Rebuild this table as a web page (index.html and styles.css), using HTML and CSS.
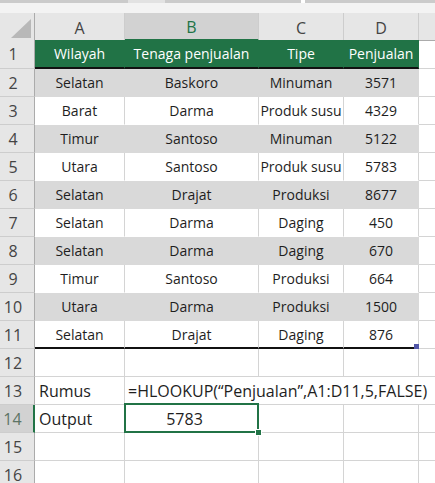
FILE: index.html
```html
<!DOCTYPE html>
<html>
<head>
<meta charset="utf-8">
<link rel="stylesheet" href="styles.css">
</head>
<body>
<div class="top">
  <div class="seg s1"></div><div class="seg s2"></div><div class="seg s3"></div><div class="seg s4"></div><div class="seg s5"></div>
</div>
<div class="sheet">
  <div class="row colhead">
    <div class="corner"><svg width="34" height="27" viewBox="0 0 34 27"><polygon points="31,6 31,25 11,25" fill="#b8b8b8"/></svg></div>
    <div class="ch">A</div><div class="ch sel">B</div><div class="ch">C</div><div class="ch">D</div><div class="ch last"></div>
  </div>

  <div class="row r1">
    <div class="rh">1</div>
    <div class="c hd">Wilayah</div><div class="c hd">Tenaga penjualan</div><div class="c hd">Tipe</div><div class="c hd">Penjualan</div><div class="c e"></div>
  </div>
  <div class="row">
    <div class="rh">2</div>
    <div class="c f">Selatan</div><div class="c f">Baskoro</div><div class="c f">Minuman</div><div class="c f">3571</div><div class="c e"></div>
  </div>
  <div class="row">
    <div class="rh">3</div>
    <div class="c w">Barat</div><div class="c w">Darma</div><div class="c w">Produk susu</div><div class="c w">4329</div><div class="c e"></div>
  </div>
  <div class="row">
    <div class="rh">4</div>
    <div class="c f">Timur</div><div class="c f">Santoso</div><div class="c f">Minuman</div><div class="c f">5122</div><div class="c e"></div>
  </div>
  <div class="row">
    <div class="rh">5</div>
    <div class="c w">Utara</div><div class="c w">Santoso</div><div class="c w">Produk susu</div><div class="c w">5783</div><div class="c e"></div>
  </div>
  <div class="row">
    <div class="rh">6</div>
    <div class="c f">Selatan</div><div class="c f">Drajat</div><div class="c f">Produksi</div><div class="c f">8677</div><div class="c e"></div>
  </div>
  <div class="row">
    <div class="rh">7</div>
    <div class="c w">Selatan</div><div class="c w">Darma</div><div class="c w">Daging</div><div class="c w">450</div><div class="c e"></div>
  </div>
  <div class="row">
    <div class="rh">8</div>
    <div class="c f">Selatan</div><div class="c f">Darma</div><div class="c f">Daging</div><div class="c f">670</div><div class="c e"></div>
  </div>
  <div class="row">
    <div class="rh">9</div>
    <div class="c w">Timur</div><div class="c w">Santoso</div><div class="c w">Produksi</div><div class="c w">664</div><div class="c e"></div>
  </div>
  <div class="row">
    <div class="rh">10</div>
    <div class="c f">Utara</div><div class="c f">Darma</div><div class="c f">Produksi</div><div class="c f">1500</div><div class="c e"></div>
  </div>
  <div class="row">
    <div class="rh">11</div>
    <div class="c w endrow">Selatan</div><div class="c w endrow">Drajat</div><div class="c w endrow">Daging</div><div class="c w endrow handle-cell">876<span class="tbl-handle"></span></div><div class="c e"></div>
  </div>
  <div class="row">
    <div class="rh">12</div>
    <div class="c"></div><div class="c"></div><div class="c"></div><div class="c"></div><div class="c e"></div>
  </div>
  <div class="row">
    <div class="rh">13</div>
    <div class="c big left">Rumus</div><div class="c big left formula">=HLOOKUP(“Penjualan”,A1:D11,5,FALSE)</div>
  </div>
  <div class="row">
    <div class="rh rsel">14</div>
    <div class="c big left">Output</div><div class="c big active">5783</div><div class="c"></div><div class="c"></div><div class="c e"></div>
  </div>
  <div class="row">
    <div class="rh">15</div>
    <div class="c"></div><div class="c"></div><div class="c"></div><div class="c"></div><div class="c e"></div>
  </div>
  <div class="row">
    <div class="rh">16</div>
    <div class="c"></div><div class="c"></div><div class="c"></div><div class="c"></div><div class="c e"></div>
  </div>
</div>
</body>
</html>
```

FILE: styles.css
```css
html, body {
  margin: 0;
  padding: 0;
  background: #ffffff;
  overflow: hidden;
}
body {
  font-family: "Open Sans", "Noto Sans", sans-serif;
  color: #222222;
}
.top {
  height: 13px;
  background: #f3f3f3;
  display: flex;
  align-items: flex-start;
}
.seg { height: 3px; }
.s1 { width: 128px; background: #cbcbcb; }
.s2 { width: 37px; background: #e2e2e2; }
.s3 { width: 136px; background: #cbcbcb; }
.s4 { width: 4px; background: #ffffff; }
.s5 { flex: 1; background: #cbcbcb; }

.sheet {
  display: flex;
  flex-direction: column;
}
.row {
  display: grid;
  grid-template-columns: 35px 90px 134px 85px 75px 1fr;
  height: 28px;
}
.row > div {
  box-sizing: border-box;
  display: flex;
  align-items: center;
  justify-content: center;
  white-space: nowrap;
}
.colhead { height: 27px; }
.r1 { height: 29px; }

.corner {
  background: #e6e6e6;
  border-right: 1px solid #ababab;
  border-bottom: 1px solid #ababab;
  align-items: flex-start !important;
  justify-content: flex-start !important;
}
.corner svg { display: block; }
.ch {
  background: #e6e6e6;
  border-right: 1px solid #cdcdcd;
  border-bottom: 1px solid #ababab;
  font-size: 16px;
  color: #444444;
  padding-top: 2px;
}
.ch.sel {
  background: #d2d2d2;
  color: #217346;
  border-bottom: 2px solid #217346;
}
.ch.last { border-right: none; }

.rh {
  background: #e6e6e6;
  border-right: 1px solid #ababab;
  border-bottom: 1px solid #cdcdcd;
  font-size: 16px;
  color: #444444;
  padding-right: 8px;
}
.rh.rsel {
  background: #d2d2d2;
  color: #5d7466;
  border-right: 2px solid #217346;
}

.c {
  border-right: 1px solid #d4d4d4;
  border-bottom: 1px solid #d4d4d4;
  font-size: 14px;
  color: #1e1e1e;
}
.c.e { border-right: none; }

.c.hd {
  background: #217346;
  color: #ffffff;
  border-right-color: #217346;
  border-bottom: 2px solid #111111;
}
.c.f {
  background: #d9d9d9;
  border-right-color: #d9d9d9;
  border-bottom-color: #d9d9d9;
}
.c.w {
  border-bottom-color: #ffffff;
}
.c.endrow {
  border-bottom: 2px solid #111111;
}
.handle-cell { position: relative; }
.tbl-handle {
  position: absolute;
  right: -1px;
  bottom: -2px;
  width: 5px;
  height: 5px;
  background: #5257a8;
}

.c.big { font-size: 16px; }
.c.left {
  justify-content: flex-start !important;
  padding-left: 4px;
}
.c.formula {
  grid-column: 3 / -1;
  border-right: none;
  padding-left: 3px;
}
.c.active {
  position: relative;
  padding-right: 14px;
}
.c.active::after {
  content: "";
  position: absolute;
  left: -1px;
  top: -2px;
  right: -1px;
  bottom: -1px;
  border: 2px solid #217346;
}
.c.active::before {
  content: "";
  position: absolute;
  right: -4px;
  bottom: -4px;
  width: 5px;
  height: 5px;
  background: #217346;
  border: 1px solid #ffffff;
  z-index: 2;
}
```
